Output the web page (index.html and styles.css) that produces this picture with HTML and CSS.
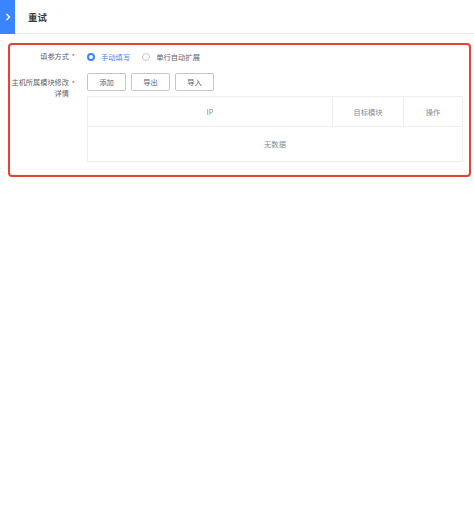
FILE: index.html
```html
<!DOCTYPE html>
<html lang="zh-CN">
<head>
    <meta charset="UTF-8">
    <meta name="viewport" content="width=device-width, initial-scale=1.0">
    <title>重试</title>
    <link rel="stylesheet" href="styles.css">
</head>
<body>
    <div class="header">
        <div class="toggle">
            <svg width="6" height="8" viewBox="0 0 6 8"><path d="M1.5 1 L4.5 4 L1.5 7" fill="none" stroke="#fff" stroke-width="1.4"/></svg>
        </div>
        <div class="title">重试</div>
    </div>
    <div class="form">
        <div class="row row-radio">
            <div class="label">填参方式<span class="req">*</span></div>
            <div class="content radios">
                <label class="radio checked"><span class="dot"></span>手动填写</label>
                <label class="radio"><span class="dot"></span>单行自动扩展</label>
            </div>
        </div>
        <div class="row">
            <div class="label multi">主机所属模块修改详情<span class="req">*</span></div>
            <div class="content">
                <div class="btns">
                    <button>添加</button>
                    <button>导出</button>
                    <button>导入</button>
                </div>
                <table class="grid">
                    <colgroup>
                        <col style="width:245px">
                        <col style="width:71px">
                        <col>
                    </colgroup>
                    <thead>
                        <tr><th>IP</th><th>目标模块</th><th>操作</th></tr>
                    </thead>
                    <tbody>
                        <tr><td colspan="3" class="empty">无数据</td></tr>
                    </tbody>
                </table>
            </div>
        </div>
    </div>
</body>
</html>
```

FILE: styles.css
```css
body{margin:0;background:#fff;font-family:"Noto Sans CJK SC","Noto Sans",sans-serif;color:#5f6169;font-size:7.3px}
.header{display:flex;align-items:center;height:34px;border-bottom:1px solid #e8e9ee;box-sizing:border-box}
.toggle{width:15px;height:34px;background:#3a84ff;display:flex;align-items:center;justify-content:center}
.title{margin-left:13px;font-size:9.4px;font-weight:bold;color:#3a3b40}
.form{margin:9px 3px 0 8px;border:2px solid #dd4632;border-radius:4px;padding:3px 6px 13px 0;box-shadow:inset 0 0 1px rgba(221,70,50,0.4)}
.row{display:flex;align-items:flex-start}
.row + .row{margin-top:8px}
.row-radio{align-items:center;height:17px}
.label{position:relative;width:70px;box-sizing:border-box;padding-right:11px;text-align:right;line-height:11px;flex-shrink:0;font-size:7.2px}
.label.multi{padding-top:4px;padding-left:1px}
.req{position:absolute;right:5px;color:#ea3636;font-size:7px}
.label.multi .req{top:5px}
.content{flex:1;margin-left:7px}
.radios{display:flex;align-items:center}
.radio{display:flex;align-items:center;margin-right:12px;color:#5f6169}
.radio .dot{width:8px;height:8px;border:1px solid #c4c6cc;border-radius:50%;box-sizing:border-box;margin-right:6px}
.radio.checked{color:#3a84ff}
.radio.checked .dot{border:2.5px solid #3a84ff}
.btns{display:flex;gap:5px}
button{width:39px;height:18px;padding:0;border:1px solid #c4c6cc;border-radius:2px;background:#fff;color:#5f6169;font-family:inherit;font-size:7.3px}
.grid{margin-top:5px;width:376px;border-collapse:collapse;table-layout:fixed;border:1px solid #eceef2}
.grid th{height:29px;padding:0;font-weight:normal;color:#888b93;border-bottom:1px solid #eceef2;border-left:1px solid #eceef2;text-align:center}
.grid th:first-child{border-left:none}
.grid td.empty{height:34px;padding:0;text-align:center;color:#888b93}
```
